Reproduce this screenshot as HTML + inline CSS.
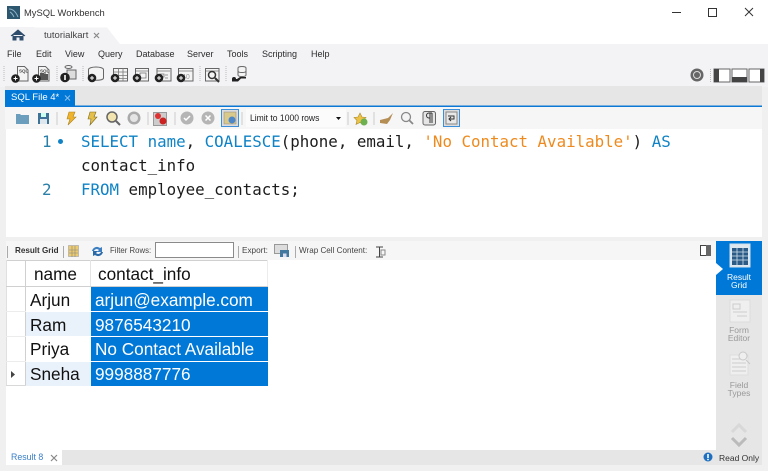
<!DOCTYPE html>
<html><head><meta charset="utf-8"><style>
html,body{margin:0;padding:0;width:768px;height:471px;overflow:hidden;background:#f0f0f0;font-family:"Liberation Sans",sans-serif;}
.a{position:absolute;white-space:nowrap}
.b{position:absolute}
.m{font-size:9px;color:#2b2b2b;top:48px;line-height:12px}
.c{font-family:"DejaVu Sans Mono",monospace;font-size:15.8px;line-height:20px;color:#1c1c1c}
.k{color:#0f83c6}.s{color:#ee8a1d}
.t{font-size:8px;color:#444;top:245px;line-height:12px}
.cell{position:absolute;font-size:17.2px;line-height:24px;white-space:nowrap}
.w{color:#fff}
.sd{position:absolute;width:46px;left:716px;text-align:center;font-size:8.5px;line-height:8.5px}
</style></head><body>
<div style="position:relative;width:768px;height:471px;overflow:hidden;filter:blur(.3px)">
<div class="b" style="left:0;top:0;width:768px;height:44px;background:#fff"></div>
<div class="a" style="left:24px;top:6px;font-size:9.400px;line-height:13px;color:#333">MySQL Workbench</div>
<div class="b" style="left:0;top:44px;width:768px;height:43px;background:#f3f3f6"></div>
<div class="b" style="left:5px;top:86px;width:757px;height:21px;background:#e6e6e6"></div>
<div class="b" style="left:0;top:27px;width:34px;height:17px;background:#f3f3f6"></div>
<svg class="b" style="left:0;top:0" width="768" height="130" viewBox="0 0 768 130">
<rect x="7" y="6" width="13" height="13" fill="#2d566f"/><path d="M9 9c4 0 7 3 9 8M10 12c2 1 3 3 4 5" stroke="#8fb2c6" fill="none" stroke-width="1"/>
<path d="M34 44V27.500H107L120 44Z" fill="#f3f3f6"/>
<path d="M11 36l7-6 7 6M13 35v5h3v-3h4v3h3v-5" fill="#2f4e6d" stroke="#2f4e6d" stroke-width="1"/>
<path d="M94 33l5 5M99 33l-5 5" stroke="#888" stroke-width="1.200"/>
<path d="M672 12.500h9" stroke="#333" stroke-width="1"/>
<rect x="708.500" y="8.500" width="8" height="8" fill="none" stroke="#333"/>
<path d="M745 8l8 8M753 8l-8 8" stroke="#333"/>
<!-- main toolbar -->
<path d="M4 66v16M57 66v16M83 66v16M200 66v16M226 66v16" stroke="#bbb" stroke-dasharray="1 1"/>
<g fill="#f4f4f4" stroke="#666" stroke-width="1">
<path d="M17.500 66.500h7l3.500 3.500v11h-10.500z"/><path d="M38.500 66.500h7l3.500 3.500v11h-10.500z"/>
<rect x="113.500" y="68.500" width="14" height="12.500"/><rect x="135.500" y="68.500" width="13" height="12.500"/><rect x="157" y="68.500" width="14" height="12.500"/><rect x="178.500" y="68.500" width="14.500" height="12.500"/><rect x="205.500" y="68.500" width="13.500" height="12.500"/>
<ellipse cx="96" cy="69.500" rx="7.500" ry="2.500"/><path d="M88.500 70v8c0 3 15 3 15 0v-8"/>
<ellipse cx="68.500" cy="67" rx="3.500" ry="1.500"/><path d="M67 70h9v9H67z" fill="#ddd"/>
<ellipse cx="242" cy="68" rx="4" ry="1.500"/><path d="M238 68v7c0 2 8 2 8 0v-7M238 71c0 2 8 2 8 0"/>
</g>
<text x="19" y="72.500" font-size="4.500" fill="#444" font-family="Liberation Sans" font-weight="bold">SQL</text>
<text x="40" y="72.500" font-size="4.500" fill="#444" font-family="Liberation Sans" font-weight="bold">SQL</text>
<path d="M40 73h4l1 1h3v6h-8z" fill="#555"/>
<g stroke="#777" stroke-width=".8" fill="none"><path d="M114 72h13M114 75.500h13M114 78.500h13M118.500 68v13M123 68v13"/><path d="M136 71h12M157 71h13M179 71h14M206 71h13"/><rect x="140" y="73" width="6" height="5"/><path d="M160 74h4v3h-4zM165 75h3M165 78h3"/></g>
<text x="182" y="79" font-size="7" fill="#999" font-family="Liberation Sans">40</text>
<g fill="#222"><circle cx="15.500" cy="78.500" r="4.300"/><circle cx="36.500" cy="78.500" r="4.300"/><circle cx="65" cy="77.500" r="4.800"/><circle cx="92" cy="78" r="4.300"/><circle cx="115" cy="78" r="4.300"/><circle cx="137" cy="78" r="4.300"/><circle cx="159" cy="78" r="4.300"/><circle cx="181" cy="78" r="4.300"/><circle cx="212" cy="75" r="3.500" fill="none" stroke="#333" stroke-width="1.500"/><path d="M215 78l4 4" stroke="#333" stroke-width="2"/><path d="M232 79h5l3-2h6v1.500h-5l-3 3h-6z"/><circle cx="234" cy="79" r="2"/></g>
<path d="M13.500 78.500h4M15.500 76.500v4M34.500 78.500h4M36.500 76.500v4M90 78h4M92 76v4M113 78h4M115 76v4M135 78h4M137 76v4M157 78h4M159 76v4M179 78h4M181 76v4" stroke="#fff"/>
<rect x="64.200" y="75" width="1.600" height="5" fill="#fff"/>
<!-- right icons -->
<circle cx="697" cy="75" r="6.500" fill="#666"/><circle cx="697" cy="75" r="3.500" fill="none" stroke="#ddd"/>
<path d="M710.500 69v13" stroke="#bbb" stroke-dasharray="1 1"/>
<rect x="714" y="69" width="16" height="13" fill="#fff" stroke="#666"/><rect x="714" y="69" width="5" height="13" fill="#444"/>
<rect x="732" y="69" width="15" height="13" fill="#fff" stroke="#666"/><rect x="732" y="77" width="15" height="5" fill="#444"/>
<rect x="749" y="69" width="15" height="13" fill="#fff" stroke="#666"/><rect x="760" y="69" width="4" height="13" fill="#444"/>
<!-- SQL tab -->
<rect x="5" y="90" width="70" height="17" fill="#0078d7"/>
<path d="M65 95.500l5 5M70 95.500l-5 5" stroke="#8fc0e8" stroke-width="1"/>
<rect x="5" y="105.500" width="757" height="1.500" fill="#0a78d4"/>
<rect x="5" y="107" width="757" height="22" fill="#f6f6f6"/>
<path d="M16 114h4l1 1h8v9H16z" fill="#6b9dbd"/>
<rect x="38" y="113" width="11" height="11" fill="#3f7297"/><rect x="41" y="113" width="5" height="4" fill="#cfe"/><rect x="40" y="119" width="7" height="5" fill="#dfe7ee"/>
<path d="M57 112v13" stroke="#ccc"/>
<path d="M69 112h6l-2 5h3l-8 8 2-6h-3z" fill="#f0b32c" stroke="#aa8420" stroke-width=".6"/>
<path d="M90 112h6l-2 5h3l-7 8 1-6h-3z" fill="#e4c04a" stroke="#7d6a20" stroke-width=".6"/>
<circle cx="112" cy="117" r="5" fill="#f3e5b0" stroke="#666" stroke-width="1.500"/><path d="M116 121l4 4" stroke="#666" stroke-width="2"/>
<circle cx="134" cy="118" r="6.500" fill="#aaa"/><circle cx="134" cy="118" r="4" fill="#e5e5e5"/>
<path d="M148 112v13M175 112v13" stroke="#ccc"/>
<rect x="153.500" y="112.500" width="13" height="13" fill="#ccc" stroke="#999"/><circle cx="158" cy="116" r="3" fill="#d33"/><circle cx="163" cy="121" r="3.500" fill="#c22"/>
<circle cx="187" cy="118" r="6.500" fill="#b5b5b5"/><path d="M184 118l2 2 4-4" stroke="#fff" fill="none" stroke-width="1.500"/>
<circle cx="208" cy="118" r="6.500" fill="#b5b5b5"/><path d="M205.500 115.500l5 5M210.500 115.500l-5 5" stroke="#fff" stroke-width="1.500"/>
<rect x="221.500" y="109.500" width="17" height="17" fill="#ddd" stroke="#3b8fd9"/><rect x="224" y="112" width="12" height="12" fill="#d9c98a" stroke="#888" stroke-width=".5"/><circle cx="232" cy="120" r="3.500" fill="#4d87c9"/>
<path d="M242 112v13M348 112v13M374 112v13" stroke="#ccc"/>
<rect x="246" y="109" width="100" height="18" fill="#fbfbfb"/>
<path d="M336 117h5l-2.500 3z" fill="#111"/>
<path d="M360 113l2 4 4 .5-3 3 1 4-4-2-4 2 1-4-3-3 4-.5z" fill="#eec245" stroke="#a88a2c" stroke-width=".6"/><circle cx="364" cy="122" r="3.500" fill="#6db04f"/>
<path d="M380 120l8-2 5-5-3 7-3 4-7-1z" fill="#b48e55"/>
<circle cx="406" cy="117" r="4.500" fill="#f4f4f4" stroke="#888" stroke-width="1.300"/><path d="M409 120l4 4" stroke="#888" stroke-width="1.800"/>
<rect x="423" y="111.500" width="12.500" height="13.500" rx="2" fill="#e5e5e5" stroke="#666"/><path d="M430 113v10M432 113v10M432 113h-3a2.500 2.500 0 0 0 0 5h1" stroke="#333" fill="none"/>
<rect x="443.500" y="109.500" width="16" height="17" fill="#ddd" stroke="#3b8fd9"/><rect x="446" y="112" width="11" height="12" fill="#e8e8e8" stroke="#888"/><path d="M448 116h6v3h-5M451 117l-2 2 2 2" stroke="#333" fill="none"/>
</svg>
<div class="a" style="left:30px;top:28px;width:70px;padding-left:14px;font-size:9.500px;line-height:15px;color:#444">tutorialkart</div>
<div class="a m" style="left:7px">File</div><div class="a m" style="left:36px">Edit</div><div class="a m" style="left:65px">View</div><div class="a m" style="left:98px">Query</div><div class="a m" style="left:136px">Database</div><div class="a m" style="left:187px">Server</div><div class="a m" style="left:227px">Tools</div><div class="a m" style="left:262px">Scripting</div><div class="a m" style="left:311px">Help</div>
<div class="a" style="left:11px;top:91px;font-size:9.500px;line-height:14px;color:#fff">SQL File 4*</div>
<div class="a" style="left:250px;top:113px;font-size:9.500px;line-height:12px;color:#222;transform-origin:0 0;transform:scaleX(.9)">Limit to 1000 rows</div>
<!-- Editor -->
<div class="b" style="left:6px;top:129px;width:756px;height:108px;background:#fff"></div>
<div class="a c" style="left:42px;top:132px;color:#2a7fa8">1</div>
<div class="b" style="left:57.500px;top:138.500px;width:5px;height:5px;border-radius:50%;background:#0f83c6"></div>
<div class="a c" style="left:81px;top:132px"><span class="k">SELECT name</span>, <span class="k">COALESCE</span>(phone, email, <span class="s">'No Contact Available'</span>) <span class="k">AS</span></div>
<div class="a c" style="left:81px;top:156px">contact_info</div>
<div class="a c" style="left:42px;top:180px;color:#2a7fa8">2</div>
<div class="a c" style="left:81px;top:180px"><span class="k">FROM</span> employee_contacts;</div>
<!-- Result toolbar -->
<div class="b" style="left:6px;top:241px;width:710px;height:19px;background:#f6f6f6"></div>
<div class="b" style="left:6px;top:260px;width:710px;height:190px;background:#fff"></div>
<div class="a t" style="left:15px;font-weight:bold;font-size:8.100px;color:#333">Result Grid</div>
<div class="a t" style="left:110px;font-size:7.800px">Filter Rows:</div>
<div class="b" style="left:155px;top:242px;width:77px;height:14px;background:#fff;border:1px solid #8a8a8a"></div>
<div class="a t" style="left:242px;font-size:8.200px">Export:</div>
<div class="a t" style="left:299px;font-size:8.100px">Wrap Cell Content:</div>
<svg class="b" style="left:0;top:241px" width="768" height="20" viewBox="0 241 768 20">
<path d="M7.500 246v12M63.500 246v12M238.500 246v12M295.500 246v12" stroke="#aaa"/>
<rect x="68.500" y="245.500" width="10" height="11" fill="#eccb6e" stroke="#aaa" stroke-width=".7"/><path d="M72 246v11M75 246v11M69 250h9M69 253h9" stroke="#888" stroke-width=".6"/>
<path d="M92 251a5 5 0 0 1 8-3l2-1v5h-5l2-2a3 3 0 0 0-5 1z" fill="#3d7fc1"/><path d="M103 252a5 5 0 0 1-8 3l-2 1v-5h5l-2 2a3 3 0 0 0 5-1z" fill="#2a6aa9"/>
<rect x="274.500" y="244.500" width="13" height="9" fill="#ddd" stroke="#999"/><rect x="280" y="250" width="9" height="7" fill="#43799e"/><rect x="283" y="253.500" width="3.500" height="3.500" fill="#dde"/>
<path d="M376 247h7M376 257h7M379.500 247v10" stroke="#444"/><path d="M381 250h4v5h-4z" fill="none" stroke="#888"/>
<rect x="700.500" y="245.500" width="10" height="10" fill="#fff" stroke="#444"/><rect x="706" y="245" width="5" height="11" fill="#666"/>
</svg>
<!-- Grid -->
<div class="b" style="left:6px;top:260px;width:262px;height:27px;background:#fff;border-top:1px solid #d0d0d0;box-sizing:border-box"></div>
<div class="b" style="left:6px;top:286px;width:20px;height:100px;background:#fff"></div>
<div class="b" style="left:26px;top:287px;width:65px;height:24px;background:#fff"></div>
<div class="b" style="left:26px;top:312px;width:65px;height:24px;background:#e9f1fb"></div>
<div class="b" style="left:26px;top:337px;width:65px;height:24px;background:#fff"></div>
<div class="b" style="left:26px;top:362px;width:65px;height:24px;background:#e9f1fb"></div>
<div class="b" style="left:91px;top:287px;width:177px;height:24px;background:#0078d7"></div>
<div class="b" style="left:91px;top:312px;width:177px;height:24px;background:#0078d7"></div>
<div class="b" style="left:91px;top:337px;width:177px;height:24px;background:#0078d7"></div>
<div class="b" style="left:91px;top:362px;width:177px;height:24px;background:#0078d7"></div>
<div class="b" style="left:6px;top:260px;width:1px;height:126px;background:#e0e0e0"></div>
<div class="b" style="left:25px;top:260px;width:1px;height:126px;background:#d0d0d0"></div>
<div class="b" style="left:90px;top:260px;width:1px;height:27px;background:#e4e4e4"></div>
<div class="b" style="left:267px;top:260px;width:1px;height:27px;background:#ececec"></div>
<div class="b" style="left:6px;top:286px;width:262px;height:1px;background:#d0d0d0"></div>
<div class="b" style="left:6px;top:311px;width:20px;height:1px;background:#ececec"></div>
<div class="b" style="left:6px;top:336px;width:20px;height:1px;background:#ececec"></div>
<div class="b" style="left:6px;top:361px;width:20px;height:1px;background:#ececec"></div>
<div class="b" style="left:6px;top:385px;width:20px;height:1px;background:#d8d8d8"></div>
<svg class="b" style="left:10px;top:370px" width="6" height="9"><path d="M1 1l4 3.500-4 3.500z" fill="#444"/></svg>
<div class="cell" style="left:34px;top:262px;color:#111">name</div>
<div class="cell" style="left:98px;top:262px;color:#111">contact_info</div>
<div class="cell" style="left:30px;top:288px;color:#111">Arjun</div>
<div class="cell" style="left:30px;top:313px;color:#111">Ram</div>
<div class="cell" style="left:30px;top:337px;color:#111">Priya</div>
<div class="cell" style="left:30px;top:362px;color:#111">Sneha</div>
<div class="cell w" style="left:95px;top:288px">arjun@example.com</div>
<div class="cell w" style="left:95px;top:313px">9876543210</div>
<div class="cell w" style="left:95px;top:337px">No Contact Available</div>
<div class="cell w" style="left:95px;top:362px">9998887776</div>
<!-- Side -->
<div class="b" style="left:716px;top:241px;width:46px;height:209px;background:#e6e6e6"></div>
<div class="b" style="left:716px;top:241px;width:46px;height:54px;background:#0078d7"></div>
<svg class="b" style="left:716px;top:241px" width="46" height="209" viewBox="0 0 46 209">
<path d="M0 22l7 6-7 6z" fill="#fff"/>
<rect x="14" y="3" width="20" height="23" fill="#dfe8ee" stroke="#cfe0ee"/><rect x="16" y="7" width="16" height="17" fill="#2c5a86"/>
<path d="M16 11h16M16 15h16M16 19h16M21 7v17M27 7v17" stroke="#cfe0ee" stroke-width=".8"/>
<rect x="14" y="59" width="20" height="22" fill="#efefef" stroke="#dcdcdc"/><path d="M17 63h7v5h-7zM17 71h14M21 75h10" stroke="#ccc" fill="none"/>
<rect x="14" y="114" width="18" height="20" fill="#efefef" stroke="#ddd"/><path d="M16 118h10M16 122h14M16 126h14M16 130h14" stroke="#ccc"/><circle cx="27" cy="115" r="4" fill="#efefef" stroke="#c8c8c8"/><path d="M30 119l4 4" stroke="#c8c8c8"/>
<path d="M16 191l7-7 7 7" stroke="#d8d8d8" stroke-width="3" fill="none"/><path d="M16 197l7 7 7-7" stroke="#bbb" stroke-width="3" fill="none"/>
</svg>
<div class="sd" style="top:272.500px;color:#fff">Result<br>Grid</div>
<div class="sd" style="top:325.500px;color:#999">Form<br>Editor</div>
<div class="sd" style="top:380.500px;color:#999">Field<br>Types</div>
<!-- Bottom -->
<div class="b" style="left:6px;top:450px;width:756px;height:15px;background:#e6e6e6"></div>
<div class="b" style="left:6px;top:450px;width:56px;height:15px;background:#fff"></div>
<div class="a" style="left:11px;top:451px;font-size:8.800px;line-height:13px;color:#3a7fc8">Result 8</div>
<svg class="b" style="left:50px;top:454px" width="8" height="8"><path d="M1 1l6 6M7 1l-6 6" stroke="#888" stroke-width="1.200"/></svg>
<svg class="b" style="left:702px;top:451px" width="12" height="12"><circle cx="6" cy="6" r="4.500" fill="#1f6fc0"/><rect x="5.200" y="3" width="1.600" height="4" fill="#fff"/><rect x="5.200" y="7.800" width="1.600" height="1.400" fill="#fff"/></svg>
<div class="a" style="left:719px;top:452px;font-size:8.500px;line-height:13px;color:#333">Read Only</div>
</div>
</body></html>
